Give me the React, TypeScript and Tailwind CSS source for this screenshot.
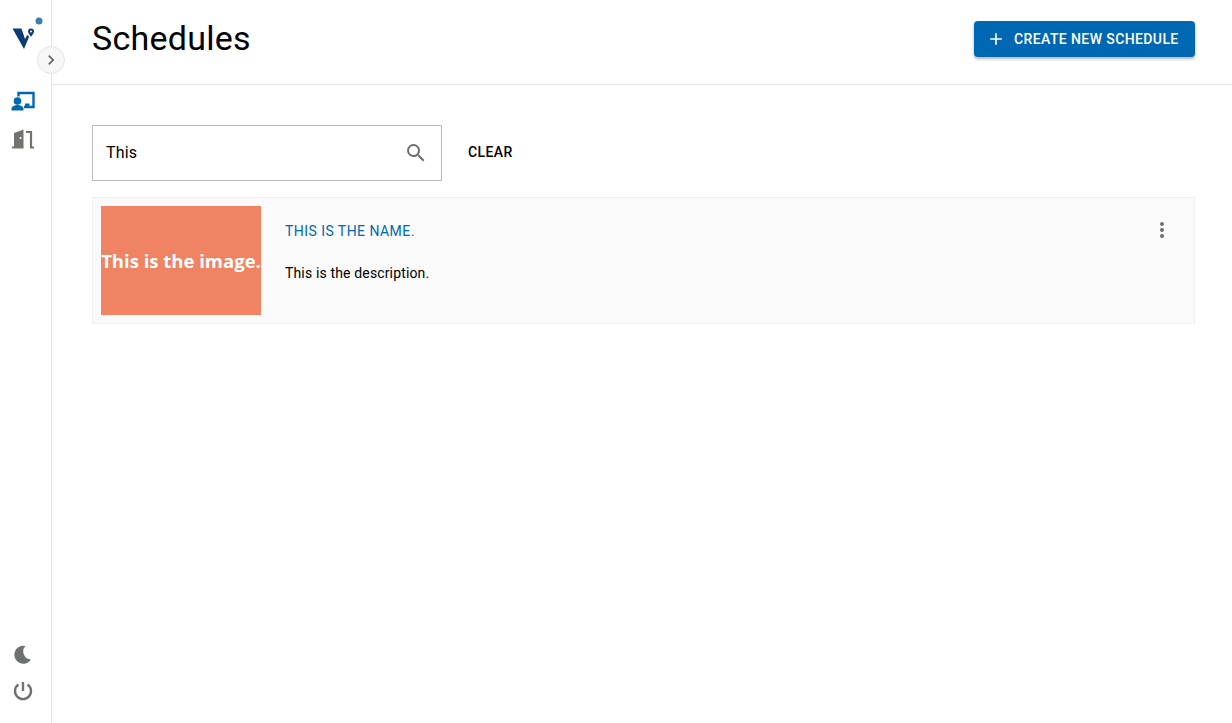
import { MdAdd, MdChevronRight, MdMoreVert, MdSearch } from 'react-icons/md'

function Logo() {
  return (
    <svg width="34" height="34" viewBox="0 0 34 34">
      <circle cx="30" cy="5" r="3.5" fill="#3f7fb0" />
      <path d="M3.5 12.5 H12.5 L16 23 L18.5 18.5 L20 21 L15 33 Z" fill="#0c3b75" />
      <path
        d="M19 15.5 a3 3 0 0 1 6 0 c0 1.8 -2 3.5 -3 5.5 c-1 -2 -3 -3.7 -3 -5.5 Z M21 15.5 a1 1 0 0 0 2 0 a1 1 0 0 0 -2 0 Z"
        fill="#0c3b75"
        fillRule="evenodd"
      />
    </svg>
  )
}

function PresenterIcon() {
  return (
    <svg width="24" height="24" viewBox="0 0 24 24" className="text-[#0067b3]">
      <path d="M7.5 8.5 V5 H22.5 V19 H13" fill="none" stroke="currentColor" strokeWidth="2.4" />
      <path d="M14 19 V15.5 H18.5 V19 Z" fill="currentColor" />
      <circle cx="6.5" cy="13" r="3.8" fill="currentColor" />
      <path d="M0.5 22.5 v-2 c0 -2 3.5 -3.5 6 -3.5 s6 1.5 6 3.5 V22.5 Z" fill="currentColor" />
    </svg>
  )
}

function DoorIcon() {
  return (
    <svg width="24" height="24" viewBox="0 0 24 24" className="text-[#74726e]">
      <path
        d="M3 21 V7 L12.5 3.5 V21 Z M8.5 12 a1 1 0 0 0 2 0 a1 1 0 0 0 -2 0 Z"
        fill="currentColor"
        fillRule="evenodd"
      />
      <path d="M1 21.5 H12.5 M19 21.5 H23" stroke="currentColor" strokeWidth="2" />
      <path d="M15 6 H20 V21" fill="none" stroke="currentColor" strokeWidth="2.2" />
    </svg>
  )
}

function MoonIcon() {
  return (
    <svg width="24" height="24" viewBox="0 0 24 24" className="text-[#6f7070]">
      <path d="M14.5 5 A9 9 0 1 0 20 18.5 A8 8 0 0 1 14.5 5 Z" fill="currentColor" />
    </svg>
  )
}

function PowerIcon() {
  return (
    <svg width="24" height="24" viewBox="0 0 24 24" className="text-[#6f7070]">
      <path d="M12 3 V12" stroke="currentColor" strokeWidth="2.4" />
      <path d="M7.5 5.5 A8 8 0 1 0 16.5 5.5" fill="none" stroke="currentColor" strokeWidth="2.4" />
    </svg>
  )
}

export default function App() {
  return (
    <div className="flex h-[723px] w-[1232px] overflow-hidden bg-white font-['Roboto',sans-serif] text-black">
      {/* Sidebar */}
      <aside className="relative flex w-[52px] shrink-0 flex-col items-center border-r border-[#e6e6e6] pb-[20px]">
        <div className="mt-[16px] ml-[1px] h-[34px]">
          <Logo />
        </div>
        <button className="absolute left-[37px] top-[46px] z-10 flex h-[28px] w-[28px] items-center justify-center rounded-full border border-[#e4e4e4] bg-[#f7f7f7] text-[#666]">
          <MdChevronRight size={20} />
        </button>
        <div className="mt-[38px] flex flex-col items-center gap-[14px] pr-[5px]">
          <PresenterIcon />
          <DoorIcon />
        </div>
        <div className="mt-auto flex flex-col items-center gap-[14px] pr-[5px]">
          <MoonIcon />
          <PowerIcon />
        </div>
      </aside>

      <main className="flex min-w-0 flex-1 flex-col">
        {/* Header */}
        <header className="flex h-[85px] shrink-0 items-center justify-between border-b border-[#e6e6e6] pl-[40px] pr-[37px]">
          <h1 className="mt-[-8px] text-[34px] font-normal leading-[40px] tracking-[0.25px]">Schedules</h1>
          <button className="mt-[-6px] flex h-[36px] w-[221px] items-center gap-[8px] rounded bg-[#0067b3] pl-[12px] text-[14px] font-medium tracking-[0.4px] text-white shadow-[0_2px_3px_rgba(0,0,0,0.3)]">
            <MdAdd size={20} />
            CREATE NEW SCHEDULE
          </button>
        </header>

        <div className="flex flex-col pl-[40px] pr-[37px] pt-[40px]">
          {/* Search */}
          <div className="flex items-center">
            <div className="flex h-[56px] w-[350px] items-center justify-between border border-[#bbbbbb] pl-[13px] pr-[13px]">
              <span className="text-[16px] tracking-[0.15px]">This</span>
              <MdSearch size={24} className="text-[#6f6f6f]" />
            </div>
            <button className="ml-[26px] mt-[-1px] text-[14px] font-medium tracking-[0.4px]">CLEAR</button>
          </div>

          {/* Result card */}
          <div className="mt-[16px] flex h-[127px] items-start border border-[#f0f0f0] bg-[#fafafa] p-[8px]">
            <div className="flex h-[109px] w-[160px] shrink-0 items-center justify-center bg-[#f08361] font-['Open_Sans',sans-serif] text-[18.5px] font-bold whitespace-nowrap text-white">
              This is the image.
            </div>
            <div className="ml-[24px] flex flex-1 flex-col pt-[16px]">
              <div className="text-[14px] font-normal leading-[18px] tracking-[0.45px] text-[#0067b3]">THIS IS THE NAME.</div>
              <div className="mt-[24px] text-[14px] leading-[18px] tracking-[0.15px]">This is the description.</div>
            </div>
            <MdMoreVert size={24} className="mt-[12px] mr-[12px] text-[#6f6f6f]" />
          </div>
        </div>
      </main>
    </div>
  )
}
